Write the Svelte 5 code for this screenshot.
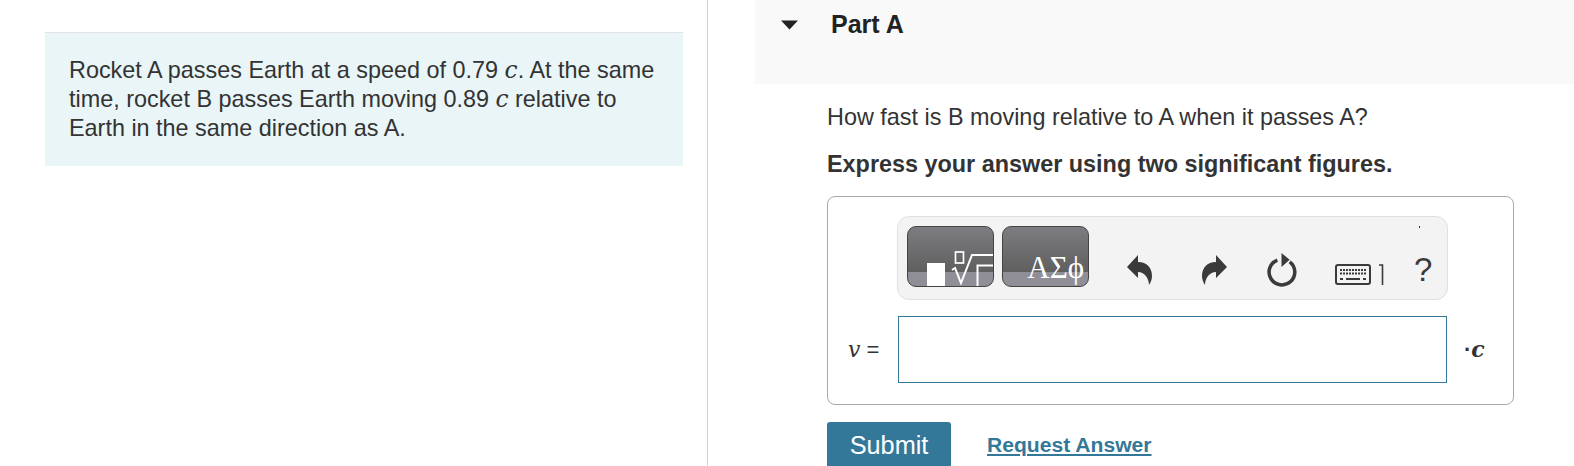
<script lang="ts">
  const tools = ['undo', 'redo', 'reset']
</script>

<div class="page">
  <section class="left">
    <div class="intro">
      <p>Rocket A passes Earth at a speed of 0.79 <i class="math">c</i>. At the same<br />time, rocket B passes Earth moving 0.89 <i class="math">c</i> relative to<br />Earth in the same direction as A.</p>
    </div>
  </section>

  <section class="right">
    <header class="part">
      <svg class="caret" width="17" height="10" viewBox="0 0 17 10"><path d="M0 .5h17L8.5 9.5z" fill="#222" /></svg>
      <h2>Part A</h2>
    </header>

    <div class="body">
      <p class="question">How fast is B moving relative to A when it passes A?</p>
      <p class="hint">Express your answer using two significant figures.</p>

      <div class="answer">
        <div class="toolbar">
          <button class="tpl" aria-label="templates">
            <svg width="87" height="61" viewBox="0 0 87 61">
              <rect x="20" y="37" width="18" height="24" fill="#fff" />
              <rect x="48.5" y="26" width="8" height="11" fill="none" stroke="#fff" stroke-width="1.7" />
              <path d="M45 44l3-2 6 15 11-28h22" fill="none" stroke="#fff" stroke-width="2" />
              <path d="M70.5 61V39.5h16" fill="none" stroke="#fff" stroke-width="2" />
            </svg>
          </button>
          <button class="tpl greek">
            <span>ΑΣϕ</span>
          </button>

          <div class="actions">
            {#each tools as t}
              <span class="tool {t}">
                {#if t === 'undo'}
                  <svg width="26" height="30" viewBox="0 0 26 30"><path d="M0 12 11 0v7c9 0 14 6 14 14 0 3-1 6-3 9 0-6-4-13-11-13v6z" fill="#3a3a3a" /></svg>
                {:else if t === 'redo'}
                  <svg width="26" height="30" viewBox="0 0 26 30"><path d="M26 12 15 0v7C6 7 1 13 1 21c0 3 1 6 3 9 0-6 4-13 11-13v6z" fill="#3a3a3a" /></svg>
                {:else}
                  <svg width="31" height="36" viewBox="0 0 30 35"><path d="M10 7.8A12.5 12.5 0 1 0 22 9.5" fill="none" stroke="#3a3a3a" stroke-width="3.4" /><path d="M14 1l8 6.5-8 7z" fill="#3a3a3a" /></svg>
                {/if}
              </span>
            {/each}
            <span class="kbd">
              <svg width="36" height="21" viewBox="0 0 36 21">
                <rect x="1" y="1" width="34" height="19" rx="2" fill="none" stroke="#3a3a3a" stroke-width="2" />
                <path d="M5 6h26M5 9.5h26" stroke="#3a3a3a" stroke-width="2" stroke-dasharray="2 1" />
                <path d="M5 15h3M11 15h14M28 15h3" stroke="#3a3a3a" stroke-width="2" />
              </svg>
              <svg width="5" height="21" viewBox="0 0 5 21"><path d="M0 1h3.5v20" fill="none" stroke="#3a3a3a" stroke-width="1.6" /></svg>
            </span>
            <span class="help">?</span>
          </div>
          <span class="dot"></span>
        </div>

        <div class="row">
          <span class="var"><i class="math">v</i> =</span>
          <input type="text" aria-label="v" />
          <span class="unit">·<i class="math">c</i></span>
        </div>
      </div>

      <div class="buttons">
        <button class="submit">Submit</button>
        <a href="#answer">Request Answer</a>
      </div>
    </div>
  </section>
</div>

<style>
  :global(body) {
    margin: 0;
    background: #fff;
    overflow: hidden;
  }

  .page {
    display: grid;
    grid-template-columns: 707px 1fr;
    height: 466px;
    overflow: hidden;
    font-family: "Liberation Sans", Arial, sans-serif;
    color: #333;
  }

  .left {
    padding: 32px 24px 0 45px;
    border-right: 1px solid #c5d5e6;
    box-sizing: border-box;
    width: 708px;
  }

  .intro {
    background: #e9f5f7;
    border-top: 1px solid #dfe3e3;
    padding: 23px 24px 0;
    height: 134px;
    box-sizing: border-box;
  }

  .intro p {
    margin: 0;
    font-size: 23.4px;
    line-height: 29px;
  }

  .math {
    font-family: "DejaVu Serif", "Liberation Serif", serif;
    font-style: italic;
  }

  .right {
    padding-left: 48px;
  }

  .part {
    background: #f9f9f9;
    height: 84px;
    display: flex;
    align-items: flex-start;
    padding: 10px 0 0 26px;
    box-sizing: border-box;
  }

  .caret {
    margin-top: 10px;
  }

  .part h2 {
    margin: 0 0 0 33px;
    font-size: 25px;
    line-height: 28px;
    font-weight: bold;
    color: #222;
  }

  .body {
    padding: 19px 60px 0 72px;
  }

  .question {
    margin: 0;
    font-size: 23.4px;
    line-height: 28px;
  }

  .hint {
    margin: 19px 0 0;
    font-size: 23.4px;
    line-height: 28px;
    font-weight: bold;
  }

  .answer {
    margin-top: 18px;
    height: 209px;
    box-sizing: border-box;
    border: 1px solid #aaa;
    border-radius: 8px;
    padding: 19px 0 0;
  }

  .toolbar {
    position: relative;
    margin-left: 69px;
    width: 551px;
    height: 84px;
    box-sizing: border-box;
    background: #f3f3f3;
    border: 1px solid #e0e0e0;
    border-radius: 12px;
    display: flex;
    align-items: flex-start;
    gap: 8px;
    padding: 9px 0 0 9px;
  }

  .tpl {
    flex: none;
    width: 87px;
    height: 61px;
    padding: 0;
    border: 1px solid #444;
    border-radius: 9px;
    overflow: hidden;
    background: linear-gradient(#7d7d81 0%, #5f5f5f 76%, #908f98 76%, #908f98 100%);
    box-sizing: border-box;
  }

  .tpl svg {
    display: block;
    margin: -1px;
  }

  .greek {
    display: flex;
    align-items: flex-end;
    justify-content: flex-end;
    color: #fff;
    font-family: "Liberation Serif", serif;
    font-size: 31px;
    line-height: 36px;
    padding-right: 4px;
  }

  .actions {
    display: flex;
    align-items: center;
    margin-left: 30px;
    height: 61px;
    padding-top: 27px;
    box-sizing: border-box;
    color: #3a3a3a;
  }

  .tool {
    display: flex;
    flex: none;
    width: 26px;
  }

  .redo {
    margin-left: 48px;
  }

  .reset {
    margin-left: 40px;
    width: 31px;
  }

  .kbd {
    display: flex;
    gap: 8px;
    align-items: center;
    margin: 9px 0 0 37px;
  }

  .help {
    margin-left: 30px;
    font-size: 33px;
    line-height: 34px;
  }

  .dot {
    position: absolute;
    top: 9px;
    left: 521px;
    width: 1px;
    height: 2px;
    background: #333;
  }

  .row {
    display: flex;
    align-items: center;
    margin-top: 16px;
    padding-left: 20px;
  }

  .var {
    width: 50px;
    font-size: 22px;
  }

  input {
    width: 549px;
    height: 67px;
    box-sizing: border-box;
    border: 1px solid #337899;
    outline: none;
    background: #fff;
  }

  .unit {
    margin-left: 17px;
    font-size: 22px;
    font-weight: bold;
  }

  .buttons {
    display: flex;
    align-items: flex-start;
    margin-top: 17px;
  }

  .submit {
    width: 124px;
    height: 50px;
    border: none;
    border-radius: 3px 3px 0 0;
    background: #337899;
    color: #fff;
    font-family: inherit;
    font-size: 25.3px;
    padding: 0 0 3px;
  }

  a {
    margin: 9px 0 0 36px;
    color: #337899;
    font-size: 21.1px;
    line-height: 28px;
    font-weight: bold;
    text-decoration: underline;
  }
</style>
